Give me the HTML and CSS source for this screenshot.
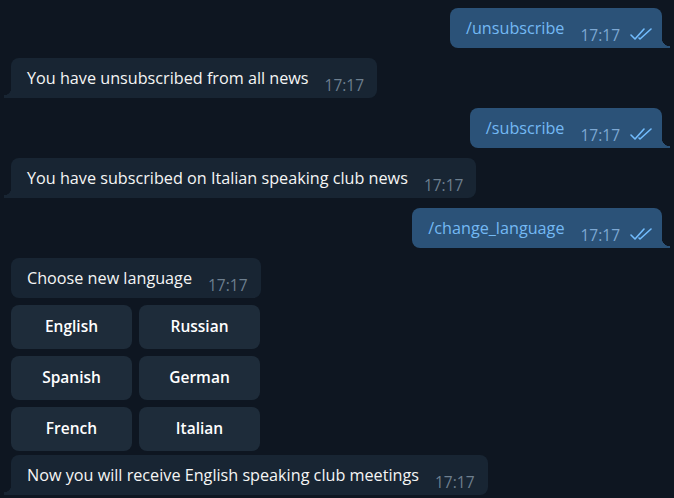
FILE: index.html
```html
<!DOCTYPE html>
<html lang="en">
<head>
    <meta charset="UTF-8">
    <meta name="viewport" content="width=device-width, initial-scale=1.0">
    <title>Chat</title>
    <link rel="stylesheet" href="styles.css">
</head>
<body>
    <div class="chat">
        <div class="msg out">
            <span class="text cmd">/unsubscribe</span>
            <span class="time">17:17</span>
            <svg class="check" viewBox="0 0 22 12" width="22" height="12"><path d="M1 7l4 4L14 1M9 10l1 1L21 1" fill="none" stroke="#72bcfd" stroke-width="1.6" stroke-linecap="round" stroke-linejoin="round"/></svg>
        </div>

        <div class="msg in">
            <span class="text">You have unsubscribed from all news</span>
            <span class="time">17:17</span>
        </div>

        <div class="msg out">
            <span class="text cmd">/subscribe</span>
            <span class="time">17:17</span>
            <svg class="check" viewBox="0 0 22 12" width="22" height="12"><path d="M1 7l4 4L14 1M9 10l1 1L21 1" fill="none" stroke="#72bcfd" stroke-width="1.6" stroke-linecap="round" stroke-linejoin="round"/></svg>
        </div>

        <div class="msg in">
            <span class="text">You have subscribed on Italian speaking club news</span>
            <span class="time">17:17</span>
        </div>

        <div class="msg out">
            <span class="text cmd">/change_language</span>
            <span class="time">17:17</span>
            <svg class="check" viewBox="0 0 22 12" width="22" height="12"><path d="M1 7l4 4L14 1M9 10l1 1L21 1" fill="none" stroke="#72bcfd" stroke-width="1.6" stroke-linecap="round" stroke-linejoin="round"/></svg>
        </div>

        <div class="with-keyboard">
            <div class="msg in no-tail">
                <span class="text">Choose new language</span>
                <span class="time">17:17</span>
            </div>
            <div class="keyboard">
                <button class="key">English</button>
                <button class="key">Russian</button>
                <button class="key">Spanish</button>
                <button class="key">German</button>
                <button class="key">French</button>
                <button class="key">Italian</button>
            </div>
        </div>

        <div class="msg in last">
            <span class="text">Now you will receive English speaking club meetings</span>
            <span class="time">17:17</span>
        </div>
    </div>
</body>
</html>
```

FILE: styles.css
```css
/* Reset */
* {
    margin: 0;
    padding: 0;
    box-sizing: border-box;
    font-family: 'Open Sans', sans-serif;
}

body {
    background-color: #0e1621;
    height: 100vh;
    overflow: hidden;
}

.chat {
    display: flex;
    flex-direction: column;
    gap: 10px;
    padding: 8px 12px 0 11px;
}

.msg {
    position: relative;
    display: flex;
    align-items: flex-end;
    height: 40px;
    padding: 0 13px 0 16px;
    border-radius: 8px;
    font-size: 16.2px;
}

.msg .text {
    align-self: center;
    line-height: 22px;
    margin-top: 0;
}

.msg .time {
    font-size: 15.5px;
    line-height: 18px;
    margin-left: 16px;
    margin-bottom: 4px;
}

/* Incoming */
.in {
    align-self: flex-start;
    background-color: #182533;
    color: #f5f5f5;
    border-bottom-left-radius: 0;
}

.in .time {
    color: #6d7f8f;
}

.in::before {
    content: '';
    position: absolute;
    left: -7px;
    bottom: 0;
    width: 7px;
    height: 10px;
    background: radial-gradient(circle at 0 0, transparent 7px, #182533 7.5px);
}

.in.no-tail {
    border-bottom-left-radius: 8px;
}

.in.no-tail::before {
    display: none;
}

/* Outgoing */
.out {
    align-self: flex-end;
    background-color: #2b5278;
    border-bottom-right-radius: 0;
    padding-right: 10px;
}

.out .cmd {
    color: #74b9f4;
}

.out .time {
    color: #7da8d3;
}

.out::after {
    content: '';
    position: absolute;
    right: -8px;
    bottom: 0;
    width: 8px;
    height: 10px;
    background: radial-gradient(circle at 100% 0, transparent 8px, #2b5278 8.5px);
}

.check {
    margin-left: 10px;
    margin-bottom: 8px;
}

/* Inline keyboard */
.with-keyboard {
    display: flex;
    flex-direction: column;
    align-items: flex-start;
    gap: 7px;
    margin-bottom: -6px;
}

.keyboard {
    display: grid;
    grid-template-columns: 121px 121px;
    gap: 7px;
}

.key {
    height: 44px;
    padding-bottom: 2px;
    border: none;
    border-radius: 8px;
    background-color: #1e2c3a;
    color: #ffffff;
    font-size: 15.5px;
    font-weight: 600;
    cursor: pointer;
}

.key:hover {
    background-color: #253545;
}
```
